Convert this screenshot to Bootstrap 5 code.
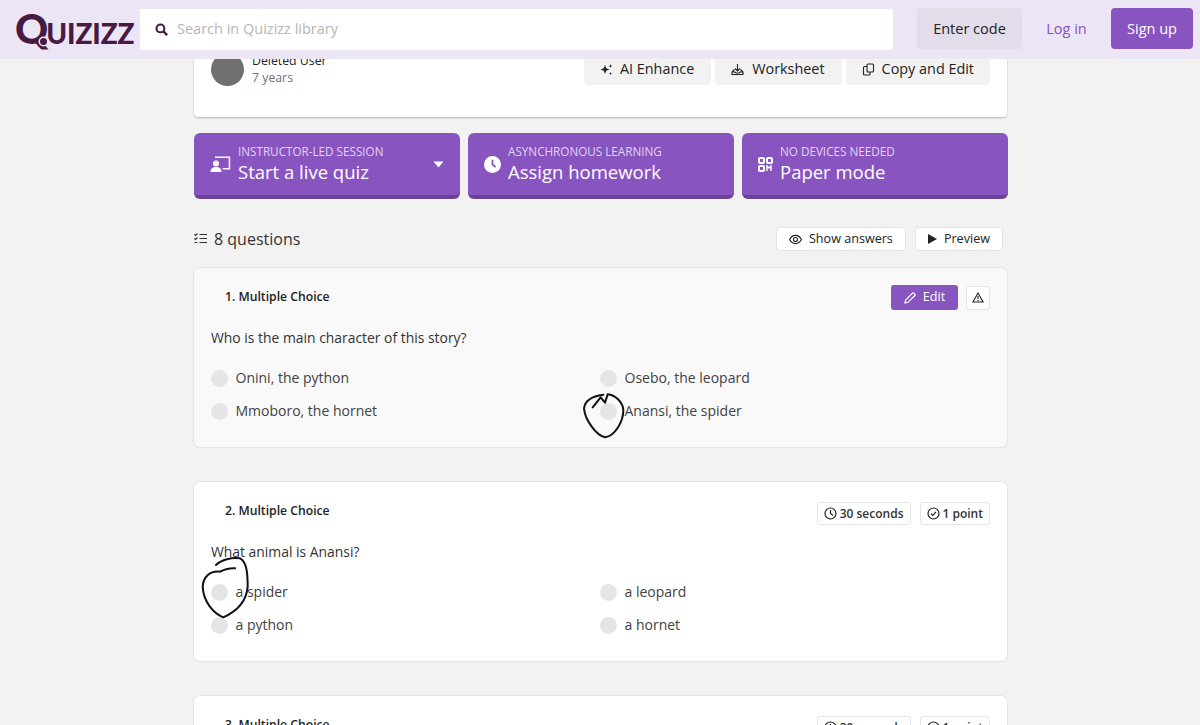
<!DOCTYPE html>
<html lang="en">
<head>
  <meta charset="UTF-8">
  <title>Quizizz</title>
  <link href="https://cdn.jsdelivr.net/npm/bootstrap@5.3.3/dist/css/bootstrap.min.css" rel="stylesheet">
  <style>
    html, body { height: 725px; overflow: hidden; }
    body { background-color: #f2f2f2; font-family: "Open Sans", sans-serif; color: #222; padding-top: 27px; }
    svg { display: block; flex: none; }

    .top-bar { height: 59px; background-color: #ece5f6; padding: 8px 7px 10px 15px; }
    .logo-text { flex: none; width: 120px; margin-right: 5px; font-family: Lato, sans-serif; font-weight: 900; font-size: 28px; line-height: 1; color: #461a42; letter-spacing: -.1px; position: relative; }
    .logo-q { font-size: 41px; letter-spacing: -2px; }
    .logo-dot { position: absolute; left: 25px; top: 30px; width: 7px; height: 7px; border-radius: 50%; background: #461a42; box-shadow: 0 0 0 1.5px #ece5f6; }
    .search-box { flex: none; width: 753px; height: 41px; background: #fff; border-radius: 2px; padding: 0 15px; margin-top: 1px; gap: 9px; font-size: 14.5px; color: #b6b6b6; }
    .top-btn { flex: none; height: 41px; border-radius: 4px; font-size: 14.5px; font-weight: 500; display: flex; align-items: center; justify-content: center; }
    .btn-code { margin-left: 24px; width: 105px; background: #e3dcea; color: #222; }
    .btn-login { width: 89px; color: #8854c0; }
    .btn-signup { width: 82px; background: #8854c0; color: #fff; }

    .page-col { width: 814px; margin-left: 194px; }
    .info-card { width: 813px; height: 90px; background: #fff; border-radius: 4px; box-shadow: 0 1px 2px rgba(0,0,0,.25); padding: 26px 17px 0; }
    .avatar { width: 33px; height: 33px; border-radius: 50%; background: #707070; margin-right: 8px; }
    .author-name { font-size: 12.3px; line-height: 16px; }
    .author-age { font-size: 12.3px; line-height: 16px; margin-top: 1px; color: #707070; }
    .tool-btn { height: 32px; padding: 0 17px 0 16px; gap: 7px; background: #f2f2f2; border-radius: 0 0 4px 4px; font-size: 14.4px; font-weight: 500; margin-left: 4px; }
    .tool-sheet { gap: 8px; }
    .tool-copy { padding-right: 16px; }

    .start-row { margin-top: 16px; gap: 8px; }
    .start-btn { flex: 1; height: 66px; background: #8854c0; border-bottom: 4px solid #6c4298; border-radius: 6px; color: #fff; padding: 0 16px; gap: 7px; }
    .start-sub { font-size: 11.7px; line-height: 15px; color: #e2d5f0; margin-top: 1px; }
    .start-title { font-size: 18.5px; line-height: 26px; font-weight: 500; }

    .list-head { margin-top: 27px; height: 25px; padding-right: 6px; }
    .list-count { font-size: 16px; gap: 7px; color: #333; }
    .ghost-btn { height: 22px; background: #fff; border-radius: 3px; box-shadow: 0 0 0 1px #e6e6e6; font-size: 12.6px; font-weight: 500; padding: 1px 12px 0; gap: 7px; margin-left: 11px; }

    .q-card { position: relative; width: 813px; height: 179px; margin-top: 17px; background: #fff; border-radius: 6px; box-shadow: 0 0 0 1px #e5e5e5, 0 1px 1px rgba(0,0,0,.08); padding: 17px 17px 0; }
    .q-card + .q-card { margin-top: 35px; }
    .q-hover { background: #f9f9f9; }
    .q-head { height: 25px; padding: 0 1px 0 14px; }
    .q-type { font-size: 12.2px; font-weight: 600; color: #222; }
    .q-text { font-size: 13.9px; line-height: 20px; margin-top: 18px; color: #333; }
    .opts { display: grid; grid-template-columns: 389px 1fr; row-gap: 15px; margin-top: 21px; }
    .opt { height: 18px; padding-bottom: 2px; gap: 7.5px; font-size: 14px; color: #424242; }
    .opt-dot { width: 17px; height: 17px; margin-bottom: -2px; border-radius: 50%; background: #e5e5e5; flex: none; }
    .edit-btn { height: 25px; width: 67px; background: #8854c0; color: #fff; border-radius: 3px; font-size: 12.6px; font-weight: 500; gap: 7px; }
    .flag-btn { width: 22px; height: 22px; margin-left: 9px; background: #fff; border-radius: 3px; box-shadow: 0 0 0 1px #e5e5e5; }
    .meta-tag { height: 21px; margin-top: 3px; background: #fff; border-radius: 3px; box-shadow: 0 0 0 1px #e5e5e5; font-size: 12px; font-weight: 600; padding: 1px 6px 0; gap: 3px; margin-left: 11px; color: #333; }

    .pen-mark { position: absolute; width: 200px; pointer-events: none; fill: none; stroke: #111; stroke-width: 6; stroke-linecap: round; stroke-linejoin: round; }
    .mark-one { left: 376px; top: 92px; height: 100px; }
    .mark-two { left: -4px; top: 48px; height: 110px; }
  </style>
</head>
<body>

<!-- Top bar -->
<nav class="top-bar fixed-top d-flex align-items-center">
  <div class="logo-text"><span class="logo-q">Q</span>UIZIZZ<span class="logo-dot"></span></div>
  <div class="search-box d-flex align-items-center">
    <svg width="13" height="13" viewBox="0 0 12 12" fill="none" stroke="#461a42"><circle cx="5" cy="5" r="3.6" stroke-width="1.9"/><path d="M7.8 7.8l3.4 3.4" stroke-width="2.2"/></svg>
    <span>Search in Quizizz library</span>
  </div>
  <div class="top-btn btn-code">Enter code</div>
  <div class="top-btn btn-login">Log in</div>
  <div class="top-btn btn-signup">Sign up</div>
</nav>

<div class="page-col">
  <!-- Quiz info -->
  <div class="info-card d-flex justify-content-between">
    <div class="d-flex">
      <div class="avatar"></div>
      <div>
        <div class="author-name">Deleted User</div>
        <div class="author-age">7 years</div>
      </div>
    </div>
    <div class="d-flex align-items-start">
      <div class="tool-btn d-flex align-items-center">
        <svg width="13" height="13" viewBox="0 0 13 13" fill="#222"><path d="M5 2l1.200 3.300L9.500 6.500 6.200 7.700 5 11 3.800 7.700.5 6.500l3.300-1.200z"/><path d="M10.500 1l.5 1.500 1.500.5-1.500.5-.5 1.500-.5-1.500L8.500 3l1.500-.5z"/><path d="M10.500 9l.4 1.100 1.100.4-1.100.4-.4 1.100-.4-1.100-1.100-.4 1.100-.4z"/></svg>
        <span>AI Enhance</span>
      </div>
      <div class="tool-btn tool-sheet d-flex align-items-center">
        <svg width="13" height="13" viewBox="0 0 13 13" fill="none" stroke="#222" stroke-width="1.100"><path d="M6.500 1v7M4 5.500l2.500 2.500L9 5.500M3.500 6.500L1 9v2.500h11V9L9.500 6.500M1 9h3l1 1h3l1-1h3"/></svg>
        <span>Worksheet</span>
      </div>
      <div class="tool-btn tool-copy d-flex align-items-center">
        <svg width="13" height="13" viewBox="0 0 13 13" fill="none" stroke="#222" stroke-width="1.100"><rect x="5" y="1" width="6.500" height="8" rx="1"/><path d="M5 3.500H2.500a1 1 0 0 0-1 1V11a1 1 0 0 0 1 1H7a1 1 0 0 0 1-1V9"/></svg>
        <span>Copy and Edit</span>
      </div>
    </div>
  </div>

  <!-- Start buttons -->
  <div class="start-row d-flex">
    <div class="start-btn d-flex align-items-center">
      <svg width="21" height="17" viewBox="0 0 21 17" fill="#fff"><circle cx="6" cy="7.500" r="3"/><path d="M.500 16c0-3.200 2.200-5 5.500-5s5.500 1.800 5.500 5z"/><path d="M5 1.600V.6h15.200v12.800h-7.500v-1.500h6V2.100H5z"/></svg>
      <div class="flex-grow-1">
        <div class="start-sub">INSTRUCTOR-LED SESSION</div>
        <div class="start-title">Start a live quiz</div>
      </div>
      <svg width="11" height="7" viewBox="0 0 11 7" fill="#fff"><path d="M.500.500h10L5.500 6.500z"/></svg>
    </div>
    <div class="start-btn d-flex align-items-center">
      <svg width="17" height="17" viewBox="0 0 16 16"><circle cx="8" cy="8" r="8" fill="#fff"/><path d="M8 3.500V8l3 2.500" fill="none" stroke="#8854c0" stroke-width="1.700"/></svg>
      <div class="flex-grow-1">
        <div class="start-sub">ASYNCHRONOUS LEARNING</div>
        <div class="start-title">Assign homework</div>
      </div>
    </div>
    <div class="start-btn d-flex align-items-center">
      <svg width="15" height="15" viewBox="0 0 15 15" fill="none" stroke="#fff" stroke-width="2"><rect x="1" y="1" width="5" height="5" rx="1"/><rect x="9" y="1" width="5" height="5" rx="1"/><rect x="1" y="9" width="5" height="5" rx="1"/><path d="M9 14V9l2 2 2-2v5" stroke-width="1.400"/></svg>
      <div class="flex-grow-1">
        <div class="start-sub">NO DEVICES NEEDED</div>
        <div class="start-title">Paper mode</div>
      </div>
    </div>
  </div>

  <!-- Question list header -->
  <div class="list-head d-flex align-items-center justify-content-between">
    <div class="list-count d-flex align-items-center">
      <svg width="13" height="11" viewBox="0 0 13 11" fill="none" stroke="#333" stroke-width="1.100"><path d="M5.500 1.500H13M5.500 5.500H13M5.500 9.500H13M.5 1.500l1 1L3.500.5M.5 5.500l1 1 2-2M.5 9.500h3"/></svg>
      <span>8 questions</span>
    </div>
    <div class="d-flex">
      <div class="ghost-btn d-flex align-items-center">
        <svg width="13" height="11" viewBox="0 0 13 11" fill="none" stroke="#222" stroke-width="1.100"><path d="M.6 5.500C2 2.800 4 1.400 6.500 1.400s4.500 1.400 5.900 4.100c-1.400 2.700-3.400 4.100-5.900 4.100S2 8.200.6 5.500z"/><circle cx="6.500" cy="5.500" r="2"/></svg>
        <span>Show answers</span>
      </div>
      <div class="ghost-btn d-flex align-items-center">
        <svg width="9" height="10" viewBox="0 0 9 10" fill="#222"><path d="M0 0l9 5-9 5z"/></svg>
        <span>Preview</span>
      </div>
    </div>
  </div>

  <!-- Question 1 -->
  <div class="q-card q-hover">
    <div class="q-head d-flex align-items-center justify-content-between">
      <div class="q-type">1. Multiple Choice</div>
      <div class="d-flex align-items-center">
        <div class="edit-btn d-flex align-items-center justify-content-center">
          <svg width="12" height="12" viewBox="0 0 12 12" fill="none" stroke="#fff" stroke-width="1.200"><path d="M1 11l.7-3L8.500 1.200a1 1 0 0 1 1.400 0l.9.900a1 1 0 0 1 0 1.400L4 10.300z"/></svg>
          <span>Edit</span>
        </div>
        <div class="flag-btn d-flex align-items-center justify-content-center">
          <svg width="12" height="11" viewBox="0 0 12 11" fill="none" stroke="#222" stroke-width="1.100"><path d="M6 1L.9 10h10.200z"/><path d="M6 4v3M6 8v1"/></svg>
        </div>
      </div>
    </div>
    <div class="q-text">Who is the main character of this story?</div>
    <div class="opts">
      <div class="opt d-flex align-items-center"><span class="opt-dot"></span>Onini, the python</div>
      <div class="opt d-flex align-items-center"><span class="opt-dot"></span>Osebo, the leopard</div>
      <div class="opt d-flex align-items-center"><span class="opt-dot"></span>Mmoboro, the hornet</div>
      <div class="opt d-flex align-items-center"><span class="opt-dot"></span>Anansi, the spider</div>
    </div>
    <svg class="pen-mark mark-one" viewBox="0 0 600 300"><path d="M68 142L92 112 105 128 113 103C135 105 158 125 160 150 160 185 135 228 105 232 78 225 45 180 42 145 45 120 70 108 100 104"/></svg>
  </div>

  <!-- Question 2 -->
  <div class="q-card">
    <div class="q-head d-flex align-items-center justify-content-between">
      <div class="q-type">2. Multiple Choice</div>
      <div class="d-flex align-items-center">
        <div class="meta-tag d-flex align-items-center">
          <svg width="13" height="13" viewBox="0 0 13 13" fill="none" stroke="#222" stroke-width="1.200"><circle cx="6.500" cy="6.500" r="5.500"/><path d="M6.500 3v3.500l2.500 2"/></svg>
          <span>30 seconds</span>
        </div>
        <div class="meta-tag d-flex align-items-center">
          <svg width="13" height="13" viewBox="0 0 13 13" fill="none" stroke="#222" stroke-width="1.200"><circle cx="6.500" cy="6.500" r="5.500"/><path d="M4 6.800l1.800 1.700L9 4.800"/></svg>
          <span>1 point</span>
        </div>
      </div>
    </div>
    <div class="q-text">What animal is Anansi?</div>
    <div class="opts">
      <div class="opt d-flex align-items-center"><span class="opt-dot"></span>a spider</div>
      <div class="opt d-flex align-items-center"><span class="opt-dot"></span>a leopard</div>
      <div class="opt d-flex align-items-center"><span class="opt-dot"></span>a python</div>
      <div class="opt d-flex align-items-center"><span class="opt-dot"></span>a hornet</div>
    </div>
    <svg class="pen-mark mark-two" viewBox="0 0 600 330"><path d="M78 105C95 88 125 82 150 85 168 95 173 120 173 170 170 205 150 240 100 262 70 250 40 215 38 170 40 140 60 122 90 125 105 118 120 114 135 115"/></svg>
  </div>

  <!-- Question 3 -->
  <div class="q-card">
    <div class="q-head d-flex align-items-center justify-content-between">
      <div class="q-type">3. Multiple Choice</div>
      <div class="d-flex align-items-center">
        <div class="meta-tag d-flex align-items-center">
          <svg width="13" height="13" viewBox="0 0 13 13" fill="none" stroke="#222" stroke-width="1.200"><circle cx="6.500" cy="6.500" r="5.500"/><path d="M6.500 3v3.500l2.500 2"/></svg>
          <span>30 seconds</span>
        </div>
        <div class="meta-tag d-flex align-items-center">
          <svg width="13" height="13" viewBox="0 0 13 13" fill="none" stroke="#222" stroke-width="1.200"><circle cx="6.500" cy="6.500" r="5.500"/><path d="M4 6.800l1.800 1.700L9 4.800"/></svg>
          <span>1 point</span>
        </div>
      </div>
    </div>
  </div>
</div>

<script src="https://cdn.jsdelivr.net/npm/bootstrap@5.3.3/dist/js/bootstrap.bundle.min.js"></script>
</body>
</html>
